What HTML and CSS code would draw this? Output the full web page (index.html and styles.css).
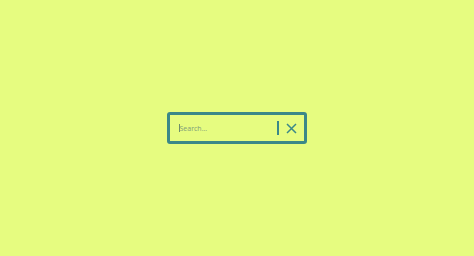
FILE: index.html
```html
<!DOCTYPE html>
<html>
<head>
<meta charset="utf-8">
<link rel="stylesheet" href="styles.css">
</head>
<body>
<div class="page">
  <div class="search">
    <span class="caret"></span>
    <input class="field" type="text" placeholder="Search...">
    <span class="divider"></span>
    <button class="clear" aria-label="Clear">
      <svg width="11" height="11" viewBox="0 0 11 11"><path d="M1 1L10 10M10 1L1 10" stroke="#3b8888" stroke-width="1.5" fill="none"/></svg>
    </button>
  </div>
</div>
</body>
</html>
```
FILE: styles.css
```css
html, body {
  margin: 0;
  padding: 0;
  background: #e6fc80;
}
.page {
  width: 474px;
  height: 256px;
  display: flex;
  align-items: center;
  justify-content: center;
}
.search {
  box-sizing: border-box;
  width: 140px;
  height: 32px;
  border: 3px solid #3b8888;
  border-radius: 3px;
  display: flex;
  align-items: center;
  padding: 0 7px 0 9px;
  margin-right: 1px;
}
.caret {
  width: 1px;
  height: 8px;
  background: #6f8f6a;
  flex: none;
}
.field {
  flex: 1;
  min-width: 0;
  border: none;
  outline: none;
  background: transparent;
  font-family: "Open Sans", sans-serif;
  font-size: 7px;
  color: #7f9e78;
  padding: 0;
}
.field::placeholder {
  color: #7f9e78;
}
.divider {
  width: 1.5px;
  height: 14px;
  background: #3b8888;
  margin-right: 7px;
}
.clear {
  border: none;
  background: transparent;
  padding: 0;
  width: 11px;
  height: 11px;
  display: flex;
}
```
